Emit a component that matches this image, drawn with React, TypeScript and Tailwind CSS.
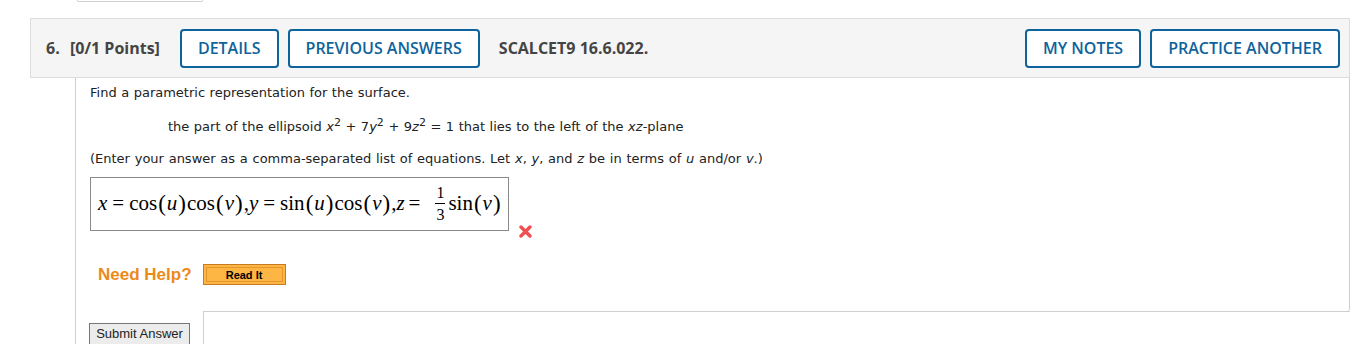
import React from "react";

const sans = { fontFamily: '"Open Sans", "Noto Sans", sans-serif' };
const verdana = { fontFamily: 'Verdana, "DejaVu Sans", sans-serif' };
const arial = { fontFamily: '"Liberation Sans", Arial, sans-serif' };
const serif = { fontFamily: '"Liberation Serif", "Times New Roman", serif' };

function OutlineButton({ children }: { children: React.ReactNode }) {
  return (
    <button className="h-[39px] px-4 rounded-[4px] border-2 border-[#0e639c] bg-white text-[#0e639c] text-[16px] font-semibold whitespace-nowrap">
      {children}
    </button>
  );
}

function Fraction() {
  return (
    <span className="inline-flex flex-col items-center mx-[3px] text-[16px] leading-[15px] -translate-y-[1px]">
      <span className="px-[1px]">1</span>
      <span className="block w-full h-[1px] bg-black my-[3px]" />
      <span className="px-[1px]">3</span>
    </span>
  );
}

function Answer() {
  const I = ({ c }: { c: string }) => <i>{c}</i>;
  const P = ({ c }: { c: string }) => <span className="text-[23px] mx-[1px] font-light">{c}</span>;
  const Eq = () => <span className="mx-[5px]">=</span>;
  return (
    <div className="flex items-center h-[54px] w-[419px] border border-[#8a8a8a] pl-[7px] text-[21px] text-black whitespace-nowrap" style={serif}>
      <I c="x" />
      <Eq />
      cos<P c="(" /><I c="u" /><P c=")" />cos<P c="(" /><I c="v" /><P c=")" />,<I c="y" />
      <Eq />
      sin<P c="(" /><I c="u" /><P c=")" />cos<P c="(" /><I c="v" /><P c=")" />,<I c="z" />
      <span className="ml-[4px] mr-[12px]">=</span>
      <Fraction />
      sin<P c="(" /><I c="v" /><P c=")" />
    </div>
  );
}

export default function App() {
  return (
    <div className="w-[1364px] h-[344px] bg-white overflow-hidden">
      {/* bottom of the previous question's box */}
      <div className="ml-[77px] w-[126px] h-[2px] border-x border-b border-[#cfcfcf] rounded-b-[3px]" />

      <div className="ml-[30px] mt-[16px] w-[1320px]">
        {/* Question header */}
        <div className="flex items-center h-[60px] border border-[#dcdcdc] bg-[#f5f5f5] pl-[15px] pr-[9px]" style={sans}>
          <span className="w-[24px] text-[16px] font-bold text-[#444]">6.</span>
          <span className="text-[16px] font-bold text-[#444] mr-[20px]">[0/1 Points]</span>
          <div className="flex items-center gap-[9px]">
            <OutlineButton>DETAILS</OutlineButton>
            <OutlineButton>PREVIOUS ANSWERS</OutlineButton>
          </div>
          <span className="ml-[19px] text-[16px] font-bold text-[#444]">SCALCET9 16.6.022.</span>
          <div className="ml-auto flex items-center gap-[9px]">
            <OutlineButton>MY NOTES</OutlineButton>
            <OutlineButton>PRACTICE ANOTHER</OutlineButton>
          </div>
        </div>

        {/* Question body */}
        <div className="ml-[45px] border-l border-[#cfcfcf]">
          <div className="border-r border-[#cfcfcf] rounded-br-[3px] pl-[14px] pt-[7px] h-[233px]">
            <p className="text-[13px] text-[#222] leading-[16px] [word-spacing:0.4px]" style={verdana}>
              Find a parametric representation for the surface.
            </p>
            <p className="mt-[18px] ml-[78px] text-[13px] text-[#222] leading-[16px] [word-spacing:0.4px]" style={verdana}>
              the part of the ellipsoid <i>x</i>
              <sup className="text-[11px]">2</sup> + 7<i>y</i>
              <sup className="text-[11px]">2</sup> + 9<i>z</i>
              <sup className="text-[11px]">2</sup> = 1 that lies to the left of the <i>xz</i>-plane
            </p>
            <p className="mt-[16px] text-[13px] text-[#222] leading-[16px] [word-spacing:0.6px]" style={verdana}>
              (Enter your answer as a comma-separated list of equations. Let <i>x</i>, <i>y</i>, and{" "}
              <i>z</i> be in terms of <i>u</i> and/or <i>v</i>.)
            </p>
            <div className="mt-[10px] flex items-end">
              <Answer />
              <svg className="ml-[10px] mb-[-7px]" width="13" height="13" viewBox="0 0 13 13">
                <path d="M2 2 L11 11 M11 2 L2 11" stroke="#f04f52" strokeWidth="3.4" strokeLinecap="round" />
              </svg>
            </div>
            <div className="mt-[31px] ml-[8px] flex items-center gap-[11px]" style={arial}>
              <span className="text-[17px] font-bold text-[#ec8a18]">Need Help?</span>
              <button className="w-[83px] h-[21px] border border-[#c67a22] bg-[#fdb543] p-[2px]">
                <span className="flex items-center justify-center h-full border border-[#e6942c] text-[11px] font-bold text-black">
                  Read It
                </span>
              </button>
            </div>
          </div>
          <div className="flex">
            <div className="w-[127px] pt-[9px] pl-[13px]">
              <button className="h-[22px] w-[101px] border border-[#777] bg-[#ececec] text-[13px] text-[#222]" style={arial}>
                Submit Answer
              </button>
            </div>
            <div className="flex-1 h-[40px] border-l border-t border-[#cfcfcf]" />
          </div>
        </div>
      </div>
    </div>
  );
}
